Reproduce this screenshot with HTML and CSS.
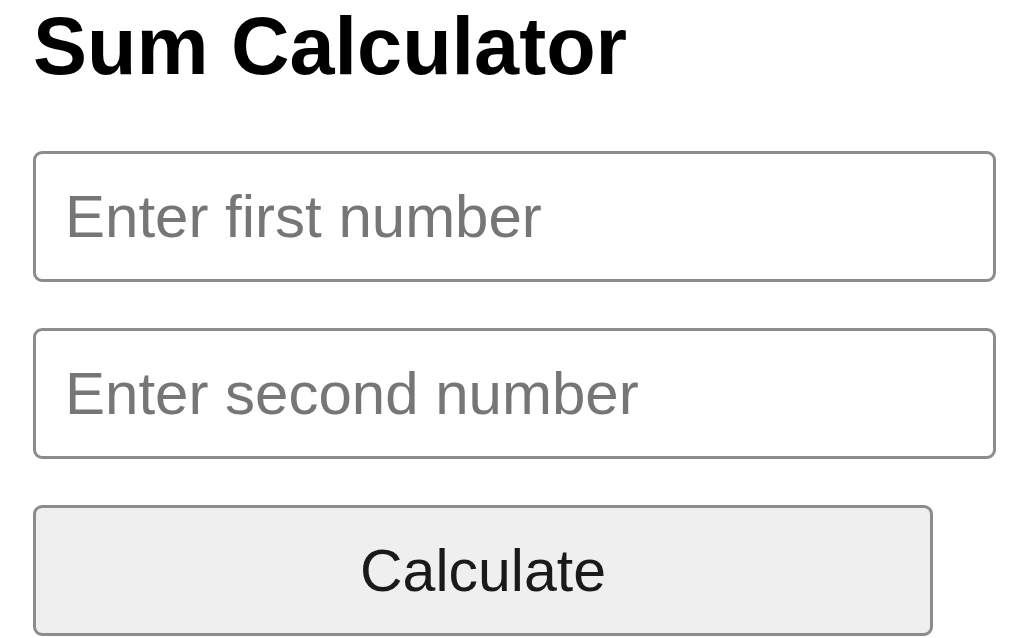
FILE: index.html
```html
<!DOCTYPE html>
<html lang="en">
<head>
<meta charset="utf-8">
<title>Sum Calculator</title>
<link rel="stylesheet" href="styles.css">
</head>
<body>
<main class="calc">
  <h1 class="calc-title">Sum Calculator</h1>
  <input class="calc-input" type="text" placeholder="Enter first number">
  <input class="calc-input" type="text" placeholder="Enter second number">
  <button class="calc-button" type="button">Calculate</button>
</main>
</body>
</html>
```

FILE: styles.css
```css
html, body {
  margin: 0;
  padding: 0;
  background: #ffffff;
}

body {
  font-family: "Liberation Sans", Arial, sans-serif;
  overflow: hidden;
}

.calc {
  display: flex;
  flex-direction: column;
  align-items: flex-start;
  padding: 0 0 0 33px;
}

.calc-title {
  margin: 0 0 58px 0;
  font-size: 81px;
  font-weight: bold;
  line-height: normal;
  color: #000000;
}

.calc-input {
  box-sizing: border-box;
  width: 963px;
  height: 131px;
  margin: 0 0 46px 0;
  padding: 0 0 0 29px;
  border: 3px solid #8c8c8c;
  border-radius: 9px;
  font-family: "Liberation Sans", Arial, sans-serif;
  font-size: 60px;
  color: #000000;
  background: #ffffff;
  outline: none;
}

.calc-input::placeholder {
  color: #767676;
}

.calc-button {
  box-sizing: border-box;
  width: 900px;
  height: 131px;
  border: 3px solid #8c8c8c;
  border-radius: 9px;
  background: #efefef;
  font-family: "Liberation Sans", Arial, sans-serif;
  font-size: 59px;
  color: #1a1a1a;
  padding: 0;
}
```
